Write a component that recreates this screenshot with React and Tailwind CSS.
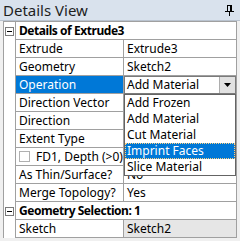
import React from "react";

const rows = [
  { type: "cat", label: "Details of Extrude3" },
  { label: "Extrude", value: "Extrude3" },
  { label: "Geometry", value: "Sketch2" },
  { label: "Operation", value: "Add Material", selected: true },
  { label: "Direction Vector", value: "" },
  { label: "Direction", value: "" },
  { label: "Extent Type", value: "" },
  { label: "FD1, Depth (>0)", value: "", check: true },
  { label: "As Thin/Surface?", value: "No" },
  { label: "Merge Topology?", value: "Yes" },
  { type: "cat", label: "Geometry Selection: 1" },
  { label: "Sketch", value: "Sketch2", gray: true },
];

const options = ["Add Frozen", "Add Material", "Cut Material", "Imprint Faces", "Slice Material"];

function MinusBox() {
  return (
    <div className="w-[9px] h-[9px] border border-[#7a7a7a] bg-white flex items-center justify-center">
      <div className="w-[5px] h-px bg-black" />
    </div>
  );
}

function Row({ row }) {
  if (row.type === "cat") {
    return (
      <div className="flex h-[18px]">
        <div className="w-[12px] flex items-center justify-center shrink-0 border-r border-[#a0a0a0]">
          <MinusBox />
        </div>
        <div className="flex-1 border-b border-[#a0a0a0] pl-[3px] font-bold tracking-[-0.45px] leading-[17px] whitespace-nowrap overflow-hidden">
          {row.label}
        </div>
      </div>
    );
  }
  return (
    <div className="flex h-[18px]">
      <div className="w-[12px] shrink-0 border-r border-[#a0a0a0]" />
      <div
        className={`w-[108px] shrink-0 border-b border-r border-[#a0a0a0] leading-[17px] whitespace-nowrap overflow-visible flex items-center ${
          row.selected ? "bg-[#0078d7] text-white" : ""
        }`}
      >
        {row.check ? (
          <>
            <div className="ml-[3px] w-[11px] h-[11px] border border-[#b0b0b0] bg-white shrink-0" />
            <span className="ml-[6px] relative z-10">{row.label}</span>
          </>
        ) : (
          <span className="pl-[3px]">{row.label}</span>
        )}
      </div>
      <div
        className={`flex-1 border-b border-[#a0a0a0] pl-[3px] leading-[17px] whitespace-nowrap overflow-hidden ${
          row.gray ? "bg-[#e6e6e6]" : ""
        }`}
      >
        {row.value}
      </div>
    </div>
  );
}

export default function App() {
  return (
    <div
      className="w-[240px] h-[241px] bg-[#f0f0f0] relative overflow-hidden text-[12px] text-black"
      style={{ fontFamily: "'Noto Sans', 'DejaVu Sans', sans-serif" }}
    >
      <div className="h-[21px] bg-[#d9e2ed] border-b border-[#b9c3cf] flex items-center justify-between pl-[3px] pr-[6px]">
        <span className="text-[15px] text-[#1e1e1e] leading-none">Details View</span>
        <svg width="9" height="11" viewBox="0 0 9 11">
          <rect x="2" y="0" width="5" height="1" fill="#000" />
          <rect x="2" y="0" width="1" height="6" fill="#000" />
          <rect x="5" y="0" width="2" height="6" fill="#000" />
          <rect x="0" y="6" width="9" height="1" fill="#000" />
          <rect x="4" y="7" width="1" height="4" fill="#000" />
        </svg>
      </div>
      <div className="ml-[3px] mr-[3px] bg-white border-l border-t border-r border-[#a0a0a0]">
        {rows.map((r, i) => (
          <Row key={i} row={r} />
        ))}
      </div>

      <div className="absolute left-[124px] top-[76px] w-[112px] h-[18px] bg-white border border-[#7a7a7a] flex items-center">
        <span className="pl-[2px] flex-1 leading-none">Add Material</span>
        <div className="w-[16px] h-[16px] bg-[#e1e1e1] border-l border-[#adadad] flex items-center justify-center">
          <svg width="7" height="4" viewBox="0 0 7 4">
            <path d="M0 0 H7 L3.5 4 Z" fill="#000" />
          </svg>
        </div>
      </div>

      <div className="absolute left-[124px] top-[94px] w-[112px] bg-white border border-[#646464]">
        {options.map((o) => (
          <div
            key={o}
            className={`h-[16px] leading-[16px] pl-[2px] whitespace-nowrap ${
              o === "Imprint Faces" ? "bg-[#0078d7] text-white outline-1 outline-dotted outline-[#ffd280] -outline-offset-1" : ""
            }`}
          >
            {o}
          </div>
        ))}
      </div>
    </div>
  );
}
